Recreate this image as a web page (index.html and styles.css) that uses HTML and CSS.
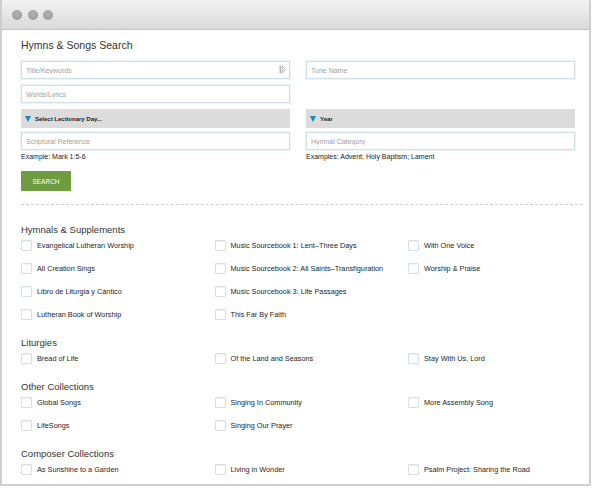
FILE: index.html
```html
<!DOCTYPE html>
<html>
<head>
  <title>Hymns &amp; Songs Search</title>
  <link rel="stylesheet" href="styles.css">
</head>
<body>
  <div class="window">
    <!-- window chrome -->
    <div class="titlebar">
      <span class="dot"></span>
      <span class="dot"></span>
      <span class="dot"></span>
    </div>

    <div class="content">
      <h1>Hymns &amp; Songs Search</h1>

      <!-- search fields -->
      <div class="form">
        <div class="field">
          <input type="text" placeholder="Title/Keywords">
          <svg class="field-icon" width="7" height="9" viewBox="0 0 7 9">
            <rect x="0.5" y="0.5" width="1.6" height="8" fill="#b5b5b5"/>
            <path d="M3.2 1 L6.3 4.5 L3.2 8 Z" fill="none" stroke="#b5b5b5" stroke-width="1"/>
          </svg>
        </div>
        <div class="field"><input type="text" placeholder="Tune Name"></div>
        <div class="field"><input type="text" placeholder="Words/Lyrics"></div>
        <div></div>
        <div class="select"><span class="arrow"></span>Select Lectionary Day...</div>
        <div class="select"><span class="arrow"></span>Year</div>
        <div class="field tight">
          <input type="text" placeholder="Scriptural Reference">
          <div class="hint">Example: Mark 1:5-6</div>
        </div>
        <div class="field tight">
          <input type="text" placeholder="Hymnal Category">
          <div class="hint">Examples: Advent; Holy Baptism; Lament</div>
        </div>
      </div>

      <button class="search">SEARCH</button>

      <div class="divider"></div>

      <!-- collections -->
      <div class="section first">
        <h2>Hymnals &amp; Supplements</h2>
        <div class="checks">
          <label><span class="box"></span>Evangelical Lutheran Worship</label>
          <label><span class="box"></span>Music Sourcebook 1: Lent–Three Days</label>
          <label><span class="box"></span>With One Voice</label>
          <label><span class="box"></span>All Creation Sings</label>
          <label><span class="box"></span>Music Sourcebook 2: All Saints–Transfiguration</label>
          <label><span class="box"></span>Worship &amp; Praise</label>
          <label><span class="box"></span>Libro de Liturgia y Cántico</label>
          <label><span class="box"></span>Music Sourcebook 3: Life Passages</label>
          <span></span>
          <label><span class="box"></span>Lutheran Book of Worship</label>
          <label><span class="box"></span>This Far By Faith</label>
        </div>
      </div>

      <div class="section">
        <h2>Liturgies</h2>
        <div class="checks">
          <label><span class="box"></span>Bread of Life</label>
          <label><span class="box"></span>Of the Land and Seasons</label>
          <label><span class="box"></span>Stay With Us, Lord</label>
        </div>
      </div>

      <div class="section">
        <h2>Other Collections</h2>
        <div class="checks">
          <label><span class="box"></span>Global Songs</label>
          <label><span class="box"></span>Singing In Community</label>
          <label><span class="box"></span>More Assembly Song</label>
          <label><span class="box"></span>LifeSongs</label>
          <label><span class="box"></span>Singing Our Prayer</label>
        </div>
      </div>

      <div class="section">
        <h2>Composer Collections</h2>
        <div class="checks">
          <label><span class="box"></span>As Sunshine to a Garden</label>
          <label><span class="box"></span>Living in Wonder</label>
          <label><span class="box"></span>Psalm Project: Sharing the Road</label>
        </div>
      </div>
    </div>
  </div>
</body>
</html>
```

FILE: styles.css
```css
* {
  box-sizing: border-box;
}

body {
  margin: 0;
  background: #fff;
  font-family: 'Liberation Sans', Arial, sans-serif;
  color: #333;
}

.window {
  width: 591px;
  height: 486px;
  border: 2px solid #cfcfcf;
  border-top: none;
  background: #fff;
}

.titlebar {
  height: 30px;
  display: flex;
  align-items: center;
  gap: 5.5px;
  padding: 0 0 0 10px;
  background: linear-gradient(#f3f3f3, #d9d9d9);
  border-bottom: 1px solid #c4c4c4;
}

.dot {
  width: 10px;
  height: 10px;
  border-radius: 50%;
  background: radial-gradient(circle at 50% 40%, #b2b2b2, #959595);
}

.content {
  padding: 8px 6px 0 19px;
}

h1 {
  margin: 0 0 9px;
  font-size: 10.5px;
  line-height: 14px;
  font-weight: normal;
  color: #333;
}

.form {
  display: grid;
  grid-template-columns: 269px 269px;
  column-gap: 16px;
  row-gap: 6px;
}

.field {
  position: relative;
}

.field.tight {
  margin-top: -2px;
}

input {
  display: block;
  width: 100%;
  height: 18px;
  margin: 0;
  padding: 0 4px;
  border: 1px solid #cfe0e5;
  box-shadow: 0 0 0 1px #eef5f7;
  font-family: inherit;
  font-size: 7px;
  color: #333;
  background: #fff;
}

input::placeholder {
  color: #a0a0a0;
}

.field-icon {
  position: absolute;
  right: 4px;
  top: 4px;
}

.select {
  height: 19px;
  display: flex;
  align-items: center;
  padding-left: 4px;
  background: #dcdcdc;
  font-size: 6px;
  font-weight: bold;
  color: #222;
}

.arrow {
  width: 0;
  height: 0;
  margin-right: 4px;
  border-left: 3.5px solid transparent;
  border-right: 3.5px solid transparent;
  border-top: 6px solid #1b86c6;
}

.hint {
  margin-top: 2px;
  font-size: 7px;
  line-height: 10px;
  color: #222;
}

.search {
  display: block;
  margin-top: 9px;
  width: 50px;
  height: 20px;
  border: none;
  background: #6e9c40;
  color: #fff;
  font-family: inherit;
  font-size: 6.5px;
  padding: 0;
}

.divider {
  margin-top: 13px;
  width: 562px;
  border-top: 1px dashed #cfcfcf;
}

.section {
  margin-top: 17px;
}

.section.first {
  margin-top: 19px;
}

h2 {
  margin: 0 0 3px;
  font-size: 9.5px;
  line-height: 12px;
  font-weight: normal;
  color: #333;
}

.checks {
  display: grid;
  grid-template-columns: repeat(3, 193.5px);
  row-gap: 11px;
}

.checks label {
  display: flex;
  align-items: center;
  gap: 5px;
  height: 12px;
  font-size: 7.3px;
  color: #1e1e1e;
  white-space: nowrap;
}

.box {
  width: 11px;
  height: 11px;
  flex: none;
  border: 1px solid #d7dfe4;
  border-radius: 1px;
  box-shadow: inset 0 1px 1px #eef2f4;
  background: #fff;
}
```
